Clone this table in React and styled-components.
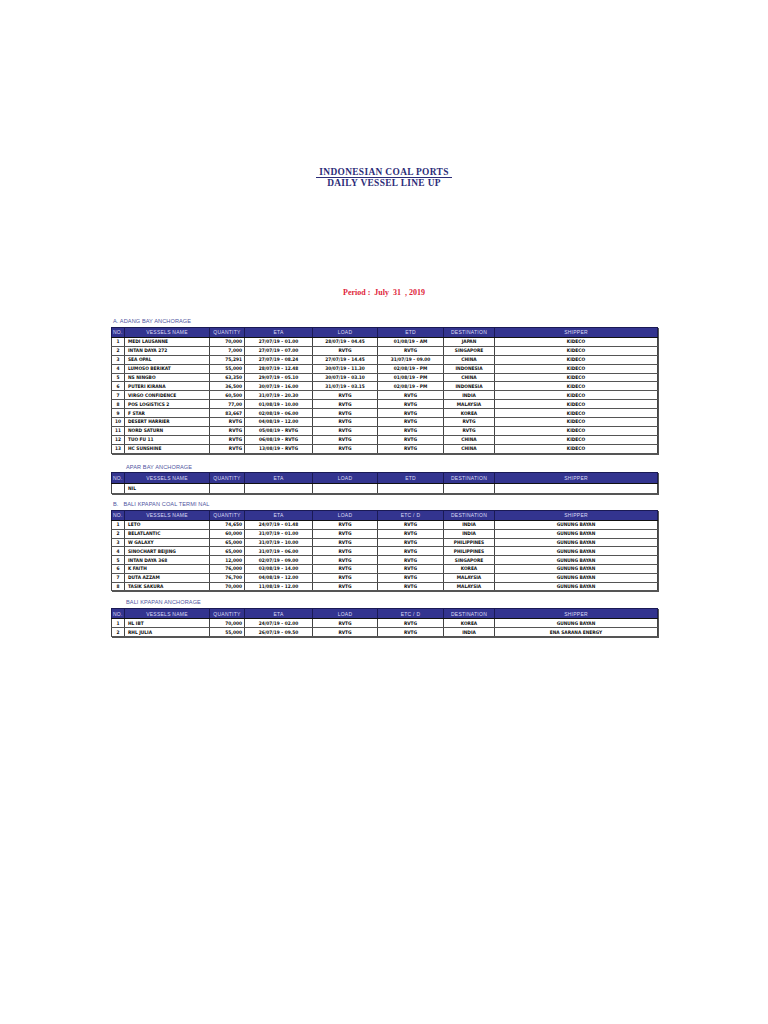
import React from "react";
import styled, { createGlobalStyle } from "styled-components";

const Global = createGlobalStyle`
  html, body { margin: 0; padding: 0; background: #ffffff; }
  body { width: 768px; min-height: 1024px; }
`;

const Page = styled.div`
  width: 546px;
  margin: 0 auto;
  padding-top: 167px;
  display: flex;
  flex-direction: column;
`;

const TitleBlock = styled.div`
  display: flex;
  flex-direction: column;
  align-items: center;
  font-family: "Liberation Serif", "DejaVu Serif", serif;
  font-weight: bold;
  color: #2c2c78;
  font-size: 9.4px;
  letter-spacing: 0.35px;
`;

const TitleLine = styled.div`
  line-height: 10px;
  border-bottom: ${(p) => (p.$underline ? "1px solid #2c2c78" : "none")};
  width: ${(p) => (p.$underline ? "136px" : "auto")};
  text-align: center;
`;

const Period = styled.div`
  margin-top: 100px;
  text-align: center;
  font-family: "Liberation Serif", "DejaVu Serif", serif;
  font-weight: bold;
  font-size: 8px;
  line-height: 9px;
  color: #e0253a;
  white-space: pre;
`;

const Section = styled.div`
  margin-top: ${(p) => p.$gap}px;
  display: flex;
  flex-direction: column;
`;

const SectionTitle = styled.div`
  font-family: "Liberation Sans", Arial, sans-serif;
  font-size: 5.6px;
  line-height: 7px;
  color: #4f55a0;
  padding-left: ${(p) => p.$indent}px;
  margin-bottom: 1.5px;
  white-space: pre;
  letter-spacing: 0.1px;
`;

const Table = styled.table`
  width: 546px;
  border-collapse: collapse;
  table-layout: fixed;
  border: 1px solid #1a1a1a;
  box-shadow: 1px 1px 0 #555;
`;

const HeadCell = styled.th`
  background: #33348f;
  color: #dcdcf6;
  font-family: "Liberation Sans", Arial, sans-serif;
  font-weight: normal;
  font-size: 5px;
  letter-spacing: 0.25px;
  height: 9.5px;
  padding: 0;
  text-align: ${(p) => (p.$left ? "left" : "center")};
  padding-left: ${(p) => (p.$left ? "1px" : "0")};
  border: 1px solid #1a1a55;
  border-bottom: 1px solid #111;
  white-space: nowrap;
  overflow: hidden;
  line-height: 8px;
`;

const Cell = styled.td`
  height: ${(p) => p.$h}px;
  padding: 0 ${(p) => (p.$align === "right" ? "2px" : "1px")} 0 ${(p) => (p.$align === "left" ? "3px" : "1px")};
  font-family: "DejaVu Sans Condensed", "DejaVu Sans", sans-serif;
  font-stretch: condensed;
  font-weight: bold;
  font-size: 4.8px;
  line-height: 5px;
  color: #0d0d0d;
  text-align: ${(p) => p.$align};
  border-left: 1px solid #444;
  border-right: 1px solid #444;
  border-bottom: 1px solid #555;
  white-space: nowrap;
  overflow: hidden;
`;

const COLS = [13, 85, 35, 68, 65, 66, 51, 163];
const ALIGN = ["center", "left", "right", "center", "center", "center", "center", "center"];

const headA = ["NO.", "VESSELS NAME", "QUANTITY", "ETA", "LOAD", "ETD", "DESTINATION", "SHIPPER"];
const headB = ["NO.", "VESSELS NAME", "QUANTITY", "ETA", "LOAD", "ETC /  D", "DESTINATION", "SHIPPER"];

const dataA = [
  ["1", "MEDI LAUSANNE", "70,000", "27/07/19 - 01.00", "28/07/19 - 04.45", "01/08/19 - AM", "JAPAN", "KIDECO"],
  ["2", "INTAN DAYA 272", "7,000", "27/07/19 - 07.00", "RVTG", "RVTG", "SINGAPORE", "KIDECO"],
  ["3", "SEA OPAL", "75,291", "27/07/19 - 08.24", "27/07/19 - 14.45", "31/07/19 - 09.00", "CHINA", "KIDECO"],
  ["4", "LUMOSO BERIKAT", "55,000", "28/07/19 - 12.48", "30/07/19 - 11.30", "02/08/19 - PM", "INDONESIA", "KIDECO"],
  ["5", "NS NINGBO", "63,350", "29/07/19 - 05.10", "30/07/19 - 03.10", "01/08/19 - PM", "CHINA", "KIDECO"],
  ["6", "PUTERI KIRANA", "36,500", "30/07/19 - 16.00", "31/07/19 - 03.15", "02/08/19 - PM", "INDONESIA", "KIDECO"],
  ["7", "VIRGO CONFIDENCE", "60,500", "31/07/19 - 20.30", "RVTG", "RVTG", "INDIA", "KIDECO"],
  ["8", "POS LOGISTICS 2", "77,00", "01/08/19 - 10.00", "RVTG", "RVTG", "MALAYSIA", "KIDECO"],
  ["9", "F STAR", "83,667", "02/08/19 - 06.00", "RVTG", "RVTG", "KOREA", "KIDECO"],
  ["10", "DESERT HARRIER", "RVTG", "04/08/19 - 12.00", "RVTG", "RVTG", "RVTG", "KIDECO"],
  ["11", "NORD SATURN", "RVTG", "05/08/19 - RVTG", "RVTG", "RVTG", "RVTG", "KIDECO"],
  ["12", "TUO FU 11", "RVTG", "06/08/19 - RVTG", "RVTG", "RVTG", "CHINA", "KIDECO"],
  ["13", "HC SUNSHINE", "RVTG", "13/08/19 - RVTG", "RVTG", "RVTG", "CHINA", "KIDECO"],
];

const dataApar = [["", "NIL", "", "", "", "", "", ""]];

const dataB = [
  ["1", "LETO", "74,650", "24/07/19 - 01.48", "RVTG", "RVTG", "INDIA", "GUNUNG BAYAN"],
  ["2", "BELATLANTIC", "60,000", "31/07/19 - 01.00", "RVTG", "RVTG", "INDIA", "GUNUNG BAYAN"],
  ["3", "W GALAXY", "65,000", "31/07/19 - 10.00", "RVTG", "RVTG", "PHILIPPINES", "GUNUNG BAYAN"],
  ["4", "SINOCHART BEIJING", "65,000", "31/07/19 - 06.00", "RVTG", "RVTG", "PHILIPPINES", "GUNUNG BAYAN"],
  ["5", "INTAN DAYA 368", "12,000", "02/07/19 - 09.00", "RVTG", "RVTG", "SINGAPORE", "GUNUNG BAYAN"],
  ["6", "K FAITH", "76,000", "03/08/19 - 14.00", "RVTG", "RVTG", "KOREA", "GUNUNG BAYAN"],
  ["7", "DUTA AZZAM", "76,700", "04/08/19 - 12.00", "RVTG", "RVTG", "MALAYSIA", "GUNUNG BAYAN"],
  ["8", "TASIK SAKURA", "70,000", "11/08/19 - 12.00", "RVTG", "RVTG", "MALAYSIA", "GUNUNG BAYAN"],
];

const dataC = [
  ["1", "HL IBT", "70,000", "24/07/19 - 02.00", "RVTG", "RVTG", "KOREA", "GUNUNG BAYAN"],
  ["2", "RHL JULIA", "55,000", "26/07/19 - 09.50", "RVTG", "RVTG", "INDIA", "ENA SARANA ENERGY"],
];

function VesselTable({ head, rows, rowH }) {
  return (
    <Table>
      <colgroup>
        {COLS.map((w, i) => (
          <col key={i} style={{ width: w }} />
        ))}
      </colgroup>
      <thead>
        <tr>
          {head.map((h, i) => (
            <HeadCell key={i} $left={i === 0}>
              {h}
            </HeadCell>
          ))}
        </tr>
      </thead>
      <tbody>
        {rows.map((r, ri) => (
          <tr key={ri}>
            {r.map((c, ci) => (
              <Cell key={ci} $h={rowH} $align={ALIGN[ci]}>
                {c}
              </Cell>
            ))}
          </tr>
        ))}
      </tbody>
    </Table>
  );
}

export default function App() {
  return (
    <>
      <Global />
      <Page>
        <TitleBlock>
          <TitleLine $underline>INDONESIAN COAL PORTS</TitleLine>
          <TitleLine>DAILY VESSEL LINE UP</TitleLine>
        </TitleBlock>
        <Period>{"Period :  July  31  , 2019"}</Period>
        <Section $gap={21}>
          <SectionTitle $indent={2}>A. ADANG BAY ANCHORAGE</SectionTitle>
          <VesselTable head={headA} rows={dataA} rowH={7.9} />
        </Section>
        <Section $gap={10}>
          <SectionTitle $indent={15}>APAR BAY ANCHORAGE</SectionTitle>
          <VesselTable head={headA} rows={dataApar} rowH={9.5} />
        </Section>
        <Section $gap={7}>
          <SectionTitle $indent={2}>{"B.   BALI KPAPAN COAL TERMI NAL"}</SectionTitle>
          <VesselTable head={headB} rows={dataB} rowH={7.8} />
        </Section>
        <Section $gap={8}>
          <SectionTitle $indent={15}>BALI KPAPAN ANCHORAGE</SectionTitle>
          <VesselTable head={headB} rows={dataC} rowH={7.8} />
        </Section>
      </Page>
    </>
  );
}
